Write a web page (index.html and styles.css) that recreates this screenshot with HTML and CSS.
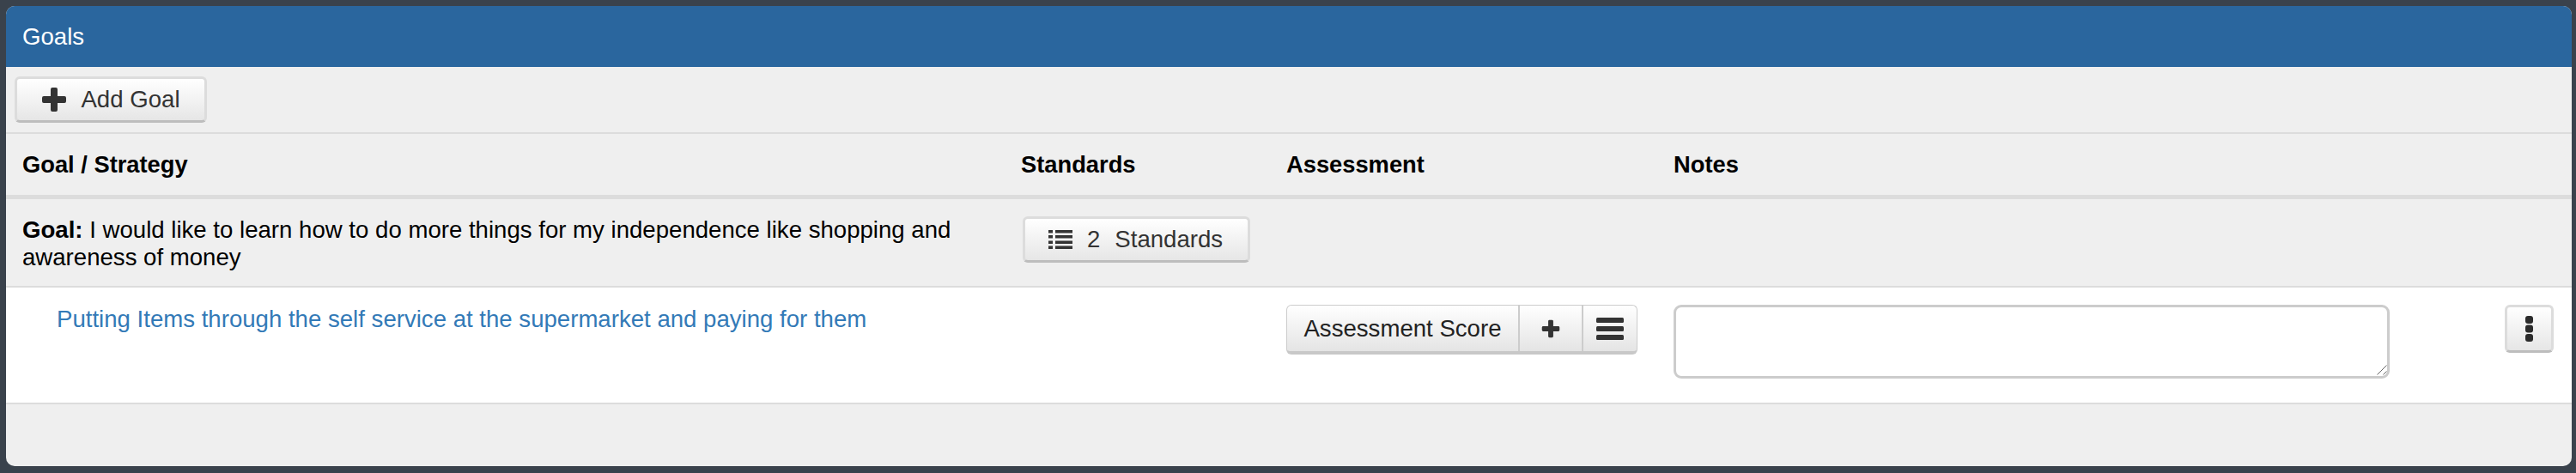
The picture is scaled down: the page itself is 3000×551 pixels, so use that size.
FILE: index.html
```html
<!DOCTYPE html>
<html lang="en">
<head>
<meta charset="utf-8">
<title>Goals</title>
<link rel="stylesheet" href="styles.css">
</head>
<body>
<section class="panel">
  <header class="panel-head">Goals</header>
  <div class="toolbar">
    <button class="btn btn-add" type="button">
      <svg class="ico-plus" viewBox="0 0 30 30" aria-hidden="true"><path d="M11 3a2 2 0 0 1 2-2h4a2 2 0 0 1 2 2v8h8a2 2 0 0 1 2 2v4a2 2 0 0 1-2 2h-8v8a2 2 0 0 1-2 2h-4a2 2 0 0 1-2-2v-8H3a2 2 0 0 1-2-2v-4a2 2 0 0 1 2-2h8z"/></svg>
      <span>Add Goal</span>
    </button>
  </div>
  <div class="grid row-head">
    <div>Goal / Strategy</div>
    <div>Standards</div>
    <div>Assessment</div>
    <div>Notes</div>
  </div>
  <div class="grid row-goal">
    <div class="goal-text"><b>Goal:</b> I would like to learn how to do more things for my independence like shopping and awareness of money</div>
    <div>
      <button class="btn btn-std" type="button">
        <svg class="ico-list" viewBox="0 0 28 22" aria-hidden="true"><path d="M0 0h5v3.500H0zM8 0h20v3.500H8zM0 6h5v3.500H0zM8 6h20v3.500H8zM0 12.500h5V16H0zM8 12.500h20V16H8zM0 18.500h5V22H0zM8 18.500h20V22H8z"/></svg>
        <span>2</span><span>Standards</span>
      </button>
    </div>
  </div>
  <div class="grid row-item">
    <div class="strategy"><a href="#">Putting Items through the self service at the supermarket and paying for them</a></div>
    <div></div>
    <div>
      <div class="btn-group">
        <button class="seg seg-label" type="button">Assessment Score</button>
        <button class="seg seg-plus" type="button" aria-label="Add"><svg class="ico-plus-sm" viewBox="0 0 30 30" preserveAspectRatio="none" aria-hidden="true"><path d="M11 3a2 2 0 0 1 2-2h4a2 2 0 0 1 2 2v8h8a2 2 0 0 1 2 2v4a2 2 0 0 1-2 2h-8v8a2 2 0 0 1-2 2h-4a2 2 0 0 1-2-2v-8H3a2 2 0 0 1-2-2v-4a2 2 0 0 1 2-2h8z"/></svg></button>
        <button class="seg seg-menu" type="button" aria-label="Menu"><svg class="ico-menu" viewBox="0 0 32 26" aria-hidden="true"><rect x="0" y="0" width="32" height="6" rx="1.5"/><rect x="0" y="10" width="32" height="6" rx="1.5"/><rect x="0" y="20" width="32" height="6" rx="1.5"/></svg></button>
      </div>
    </div>
    <div class="notes-cell">
      <div class="notes-wrap">
        <textarea class="notes" aria-label="Notes"></textarea>
        <svg class="grip" viewBox="0 0 12 12" aria-hidden="true"><path d="M0.500 11.500 11.500 0.500M7.500 11.500 11.500 7.500"/></svg>
      </div>
      <button class="btn btn-more" type="button" aria-label="More"><svg class="ico-more" viewBox="0 0 9 30" aria-hidden="true"><rect x="0" y="0" width="9" height="9" rx="3"/><rect x="0" y="10.500" width="9" height="9" rx="3"/><rect x="0" y="21" width="9" height="9" rx="3"/></svg></button>
    </div>
  </div>
</section>
</body>
</html>
```
FILE: styles.css
```css
* { box-sizing: border-box; }
html, body { height: 100%; }
body {
  margin: 0;
  padding: 7px 5px 8px 7px;
  background: #3a424c;
  font-family: "Liberation Sans", Arial, sans-serif;
  font-size: 27.6px;
  color: #000;
}
.panel {
  height: 536px;
  background: #efefef;
  border-radius: 10px;
  overflow: hidden;
}
.panel-head {
  height: 71px;
  padding: 0 19px;
  display: flex;
  align-items: center;
  background: #2a669e;
  color: #fff;
}
.toolbar {
  height: 78px;
  padding: 11px 10px 0;
  border-bottom: 2px solid #dcdcdc;
}
.btn {
  display: inline-flex;
  align-items: center;
  justify-content: center;
  margin: 0;
  padding: 0;
  border: 3px solid #dcdcdc;
  border-bottom-color: #bdbdbd;
  border-radius: 6px;
  background: linear-gradient(#fff, #e6e6e6);
  color: #333;
  font: inherit;
}
.btn-add { width: 224px; height: 54px; gap: 16px; }
.ico-plus { width: 30px; height: 30px; fill: #333; }
.grid {
  display: grid;
  grid-template-columns: 1163px 309px 451px 1fr;
  padding: 0 19px;
}
.row-head {
  height: 76px;
  align-items: center;
  font-size: 27.3px;
  font-weight: 700;
  border-bottom: 5px solid #dcdcdc;
}
.row-goal {
  height: 103px;
  padding-top: 20px;
  border-bottom: 2px solid #dcdcdc;
}
.goal-text { width: 1120px; line-height: 32px; }
.btn-std {
  width: 265px;
  height: 54px;
  margin-left: 2px;
  padding-left: 27px;
  justify-content: flex-start;
  gap: 17px;
}
.ico-list { width: 28px; height: 22px; fill: #333; }
.row-item {
  height: 136px;
  padding-top: 20px;
  background: #fff;
  border-bottom: 2px solid #dcdcdc;
}
.strategy { padding-left: 40px; padding-top: 1px; line-height: 32px; }
.strategy a { color: #337ab7; text-decoration: none; }
.btn-group {
  display: flex;
  width: 409px;
  height: 58px;
  border: 1px solid #ccc;
  border-bottom: 4px solid #c8c8c8;
  border-radius: 6px;
  overflow: hidden;
  background: linear-gradient(#fff, #e4e4e4);
}
.seg {
  display: flex;
  align-items: center;
  justify-content: center;
  margin: 0;
  padding: 0;
  border: 0;
  background: transparent;
  color: #222;
  font: inherit;
}
.seg-label { width: 269px; }
.seg-plus { width: 74px; border-left: 2px solid #ccc; }
.seg-menu { flex: 1; border-left: 2px solid #ccc; }
.ico-plus-sm { width: 22px; height: 22px; fill: #333; }
.ico-menu { width: 32px; height: 26px; fill: #333; }
.notes-cell {
  display: flex;
  align-items: flex-start;
  justify-content: space-between;
  padding-right: 2px;
}
.notes-wrap { position: relative; width: 834px; height: 86px; }
.notes {
  display: block;
  width: 100%;
  height: 100%;
  margin: 0;
  border: 3px solid #ccc;
  border-radius: 9px;
  background: #fff;
  resize: none;
}
.grip {
  position: absolute;
  right: 3px;
  bottom: 4px;
  width: 12px;
  height: 12px;
  fill: none;
  stroke: #666;
  stroke-width: 1;
}
.btn-more { width: 57px; height: 56px; }
.ico-more { width: 9px; height: 30px; fill: #2b2b2b; }
```
